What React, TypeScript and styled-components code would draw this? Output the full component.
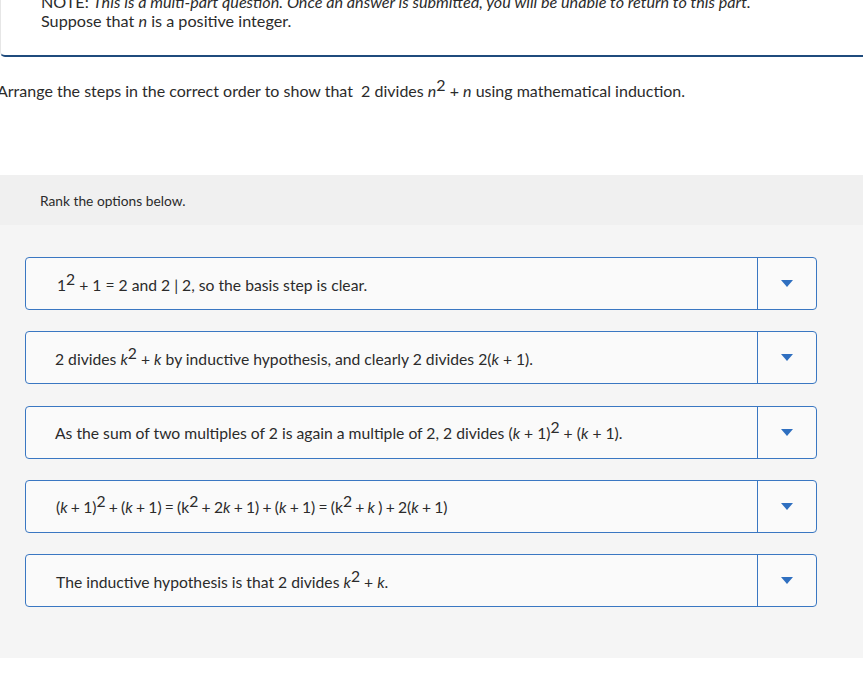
import React from "react";
import styled, { createGlobalStyle } from "styled-components";

const Global = createGlobalStyle`
  html, body { margin: 0; padding: 0; background: #ffffff; }
  body { font-family: Lato, "Open Sans", Arial, sans-serif; color: #2b2b2b; overflow: hidden; }
`;

const Page = styled.div`
  width: 863px;
  height: 673px;
  display: flex;
  flex-direction: column;
`;

const PromptCard = styled.div`
  height: 65px;
  margin-top: -8px;
  padding: 0 0 0 40px;
  border-bottom: 2px solid #1f4b7d;
  border-left: 1px solid #e6e6e6;
  border-bottom-left-radius: 5px;
  box-sizing: border-box;
  display: flex;
  flex-direction: column;
  font-size: 16.2px;
  line-height: 19px;
`;

const Note = styled.div`
  color: #2b2b2b;
  white-space: nowrap;
  em { font-style: italic; }
`;

const Question = styled.div`
  margin: 24px 0 0 -3px;
  font-size: 16px;
  line-height: 20px;
  white-space: nowrap;
`;

const Sup = styled.sup`
  font-size: 1em;
  vertical-align: 0;
  position: relative;
  top: -6px;
  line-height: 0;
`;

const Var = styled.i`
  font-style: italic;
`;

const RankBand = styled.div`
  margin-top: 74px;
  height: 50px;
  background: #f0f0f0;
  display: flex;
  align-items: center;
  padding-left: 40px;
  font-size: 13.75px;
  color: #2b2b2b;
`;

const OptionsArea = styled.div`
  background: #f5f5f5;
  height: 433px;
  padding: 32px 46px 0 25px;
  display: flex;
  flex-direction: column;
  gap: 21.3px;
  box-sizing: border-box;
`;

const Option = styled.div`
  height: 53px;
  border: 1px solid #3a77c2;
  border-radius: 4px;
  background: #fafafa;
  display: flex;
  box-sizing: border-box;
`;

const OptionText = styled.div<{ $indent: number; $tight?: boolean }>`
  flex: 1;
  display: flex;
  align-items: center;
  padding-left: ${(p) => p.$indent}px;
  padding-top: 2px;
  font-size: 15.7px;
  white-space: pre;
  word-spacing: ${(p) => (p.$tight ? "-0.8px" : "normal")};
  color: #2b2b2b;
`;

const Toggle = styled.div`
  width: 58px;
  border-left: 1px solid #3a77c2;
  display: flex;
  align-items: center;
  justify-content: center;
`;

const Caret = () => (
  <svg width="12" height="7" viewBox="0 0 12 7">
    <polygon points="0,0 12,0 6,7" fill="#2f6fc0" />
  </svg>
);

const options: { indent: number; tight?: boolean; content: React.ReactNode }[] = [
  {
    indent: 31,
    content: (
      <span>
        1<Sup>2</Sup>{" + 1 = 2 and 2 | 2, so the basis step is clear."}
      </span>
    ),
  },
  {
    indent: 29,
    content: (
      <span>
        {"2 divides "}<Var>k</Var><Sup>2</Sup>{" + "}<Var>k</Var>
        {" by inductive hypothesis, and clearly 2 divides 2("}<Var>k</Var>{" + 1)."}
      </span>
    ),
  },
  {
    indent: 29,
    content: (
      <span>
        {"As the sum of two multiples of 2 is again a multiple of 2, 2 divides ("}<Var>k</Var>{" + 1)"}
        <Sup>2</Sup>{" + ("}<Var>k</Var>{" + 1)."}
      </span>
    ),
  },
  {
    indent: 30,
    tight: true,
    content: (
      <span>
        {"("}<Var>k</Var>{" + 1)"}<Sup>2</Sup>{" + ("}<Var>k</Var>{" + 1) = (k"}<Sup>2</Sup>{" + 2"}
        <Var>k</Var>{" + 1) + ("}<Var>k</Var>{" + 1) = (k"}<Sup>2</Sup>{" + "}<Var>k</Var>{" ) + 2("}
        <Var>k</Var>{" + 1)"}
      </span>
    ),
  },
  {
    indent: 30,
    content: (
      <span>
        {"The inductive hypothesis is that 2 divides "}<Var>k</Var><Sup>2</Sup>{" + "}<Var>k</Var>{"."}
      </span>
    ),
  },
];

export default function App() {
  return (
    <Page>
      <Global />
      <PromptCard>
        <Note>
          NOTE: <em>This is a multi-part question. Once an answer is submitted, you will be unable to return to this part.</em>
        </Note>
        <Note>
          {"Suppose that "}<Var>n</Var>{" is a positive integer."}
        </Note>
      </PromptCard>
      <Question>
        {"Arrange the steps in the correct order to show that\u00a0 2 divides "}<Var>n</Var>
        <Sup>2</Sup>{" + "}<Var>n</Var>{" using mathematical induction."}
      </Question>
      <RankBand>Rank the options below.</RankBand>
      <OptionsArea>
        {options.map((o, i) => (
          <Option key={i}>
            <OptionText $indent={o.indent} $tight={o.tight}>
              {o.content}
            </OptionText>
            <Toggle>
              <Caret />
            </Toggle>
          </Option>
        ))}
      </OptionsArea>
    </Page>
  );
}
